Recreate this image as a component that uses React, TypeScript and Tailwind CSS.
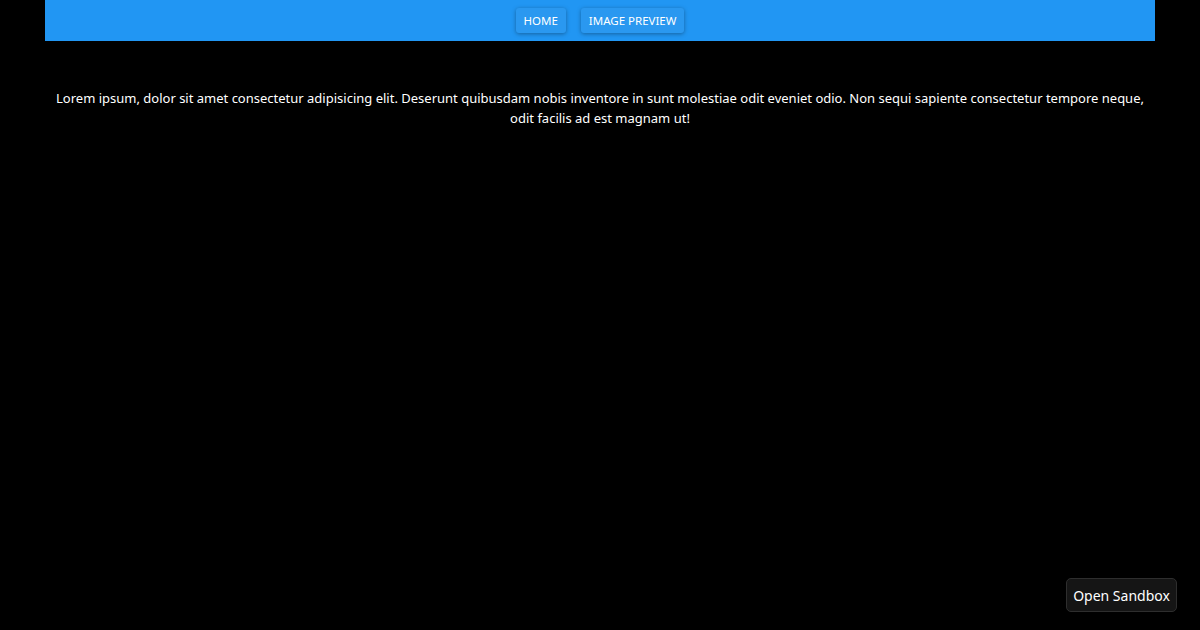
import React from 'react';

export default function App() {
  return (
    <div className="w-[1200px] h-[630px] bg-black relative font-['Roboto',sans-serif] overflow-hidden">
      <div className="mx-[45px] h-[41px] bg-[#2196f3] flex items-start justify-center gap-[15px] pt-2">
        <button className="h-[25px] px-[8px] rounded-[3px] bg-[#2a98f0] text-white text-[11.5px] shadow-[0_1px_4px_rgba(0,0,0,0.35)]">HOME</button>
        <button className="h-[25px] px-[8px] rounded-[3px] bg-[#2a98f0] text-white text-[11.5px] shadow-[0_1px_4px_rgba(0,0,0,0.35)]">IMAGE PREVIEW</button>
      </div>
      <p className="mx-[45px] mt-[47px] text-center text-white text-[13px] leading-[20px]">
        Lorem ipsum, dolor sit amet consectetur adipisicing elit. Deserunt quibusdam nobis inventore in sunt molestiae odit eveniet odio. Non sequi sapiente consectetur tempore neque, odit facilis ad est magnam ut!
      </p>
      <button className="absolute left-[1066px] top-[578px] w-[111px] h-[34px] rounded-[5px] bg-[#151515] border border-[#2e2e2e] text-white text-[14px]">Open Sandbox</button>
    </div>
  );
}
